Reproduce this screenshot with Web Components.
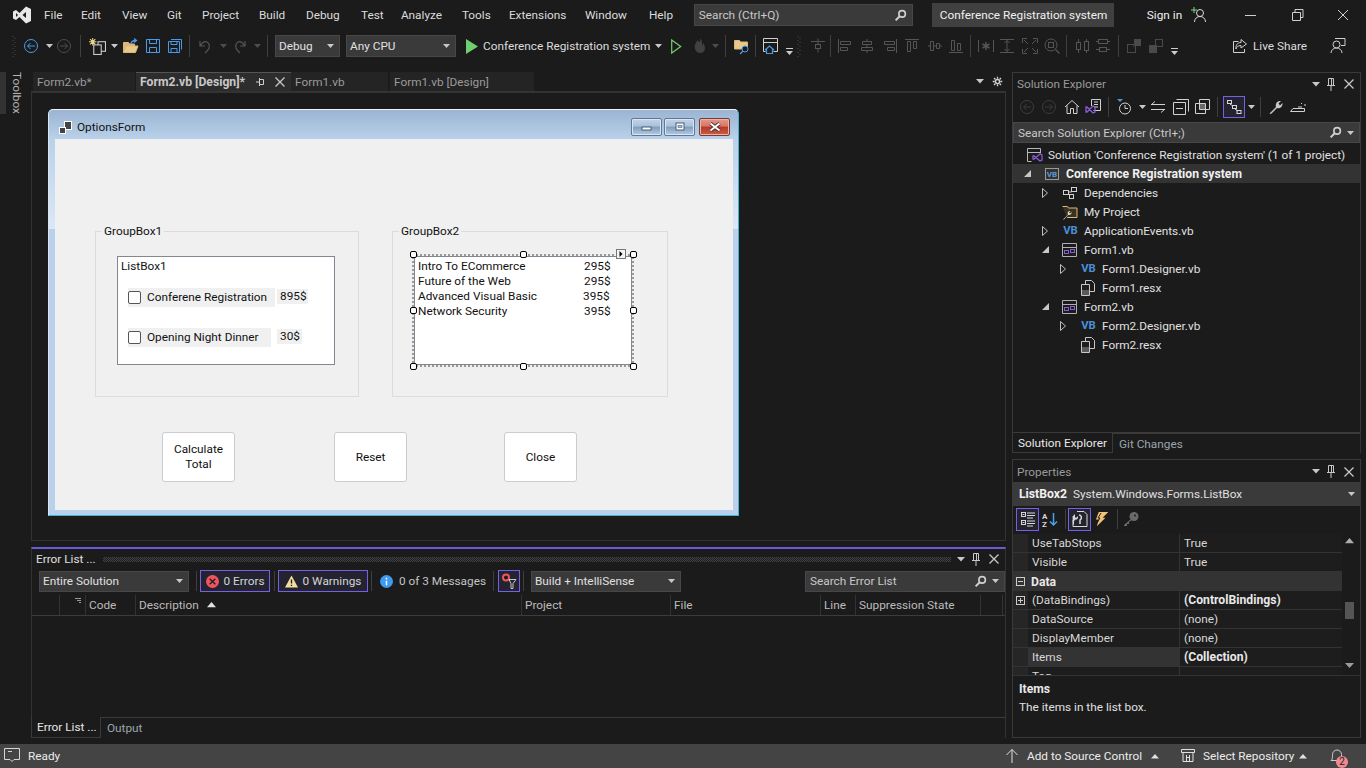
<!DOCTYPE html>
<html><head><meta charset="utf-8"><title>VS</title>
<style>
html,body{margin:0;padding:0;background:#1b1b1b;overflow:hidden}
body{font:11.8px/16px Roboto,"Liberation Sans",sans-serif;color:#dcdcdc}
</style></head><body>
<vs-app></vs-app>
<script>
const D='#555',L='#cfcfcf',B='#4a9ae6',Y='#dcb67a',P='#8a5cd6';
const I={
 back:`<circle cx="8" cy="8" r="6.5" stroke="${B}"/><path d="M12 8H4.500M7.500 5 4.500 8l3 3" stroke="${B}"/>`,
 fwd:`<circle cx="8" cy="8" r="6.5" stroke="#4c4c4c"/><path d="M4 8h7.500M8.500 5l3 3-3 3" stroke="#4c4c4c"/>`,
 fwd2:`<circle cx="8" cy="8" r="6.5" stroke="#3d3d3d"/><path d="M4 8h7.500M8.500 5l3 3-3 3" stroke="#3d3d3d"/>`,
 back2:`<circle cx="8" cy="8" r="6.5" stroke="#3d3d3d"/><path d="M12 8H4.500M7.500 5 4.500 8l3 3" stroke="#3d3d3d"/>`,
 newp:`<path d="M3.500 0v7M0 3.500h7M1 1l5 5M6 1 1 6" stroke="#e6d58a"/><rect x="8.500" y="3.500" width="7" height="9" stroke="${L}" fill="#1b1b1b"/><rect x="4.500" y="6.500" width="7" height="9" stroke="${L}" fill="#1b1b1b"/>`,
 open:`<path d="M.5 14.500v-10h5l1 1.500h5v2" stroke="${Y}" fill="${Y}"/><path d="M.5 14.500l2.500-6.500h12l-2.500 6.500z" fill="#e8c98c" stroke="${Y}"/><path d="M8 6c0-2.500 2-3.500 4.500-3.500M11 .5l2.500 2-2.500 2" stroke="${B}" stroke-width="1.300"/>`,
 save:`<path d="M1.500 1.500h13v13h-13z" stroke="${B}"/><path d="M4.500 1.500v4h7v-4M4.500 14.500v-5h7v5" stroke="${B}"/>`,
 saveall:`<path d="M1.500 3.500h11v11h-11z" stroke="${B}"/><path d="M4 1.500h10.500v10" stroke="${B}"/><path d="M4 3.500v3h6v-3M4 14.500v-4h6v4" stroke="${B}"/>`,
 undo:`<path d="M3 3v5h5M3.500 8C5 4 8 3 10 4c3 1.500 3 6 .500 8.500L8 15" stroke="${D}" stroke-width="1.200"/>`,
 redo:`<path d="M13 3v5H8M12.500 8C11 4 8 3 6 4c-3 1.500-3 6-.5 8.500L8 15" stroke="${D}" stroke-width="1.200"/>`,
 play:[12,15,`<path d="M0 0l12 7.500L0 15z" fill="#6fcf6f"/>`],
 playo:[11,15,`<path d="M.7 1l9 6.500-9 6.500z" stroke="#6fcf6f" stroke-width="1.200"/>`],
 flame:`<path d="M8 0c1 3-1 4-1 4S6 3 6 2C3 5 2 8 3 11c.7 2.500 3 4 5 4 3 0 5-2 5-5s-2-5-2-5c0 2-1 3-1 3S11 3 8 0z" fill="#414141"/>`,
 fsearch:`<path d="M.5 2.500h5l1 1.500h7v7H.5z" fill="#e8c98c" stroke="${Y}"/><circle cx="11" cy="11" r="3" stroke="${B}" fill="#1b1b1b"/><path d="M9 13l-3 3" stroke="${B}" stroke-width="1.300"/>`,
 winhome:`<path d="M.5.5h14v13h-4M.5 4.500h14M.5.5v13h2" stroke="${L}"/><path d="M2 12l4.500-4 4.500 4M3.500 11v4.500h6V11" stroke="${B}" stroke-width="1.200"/>`,
 over:[9,7,`<path d="M1 .5h7" stroke="#ccc"/><path d="M1 3h7L4.500 7z" fill="#ccc"/>`],
 grip:[4,22,`<path d="M1 1v1M3 3v1M1 5v1M3 7v1M1 9v1M3 11v1M1 13v1M3 15v1M1 17v1M3 19v1M1 21v1" stroke="#4c4c4c"/>`],
 sep:[1,22,`<rect width="1" height="22" fill="#3f3f3f"/>`],
 sep2:[1,20,`<rect width="1" height="20" fill="#3f3f3f"/>`],
 tee:`<path d="M1 3.500h14M8 .5v3M8 10.500v4" stroke="${D}"/><rect x="5.500" y="6.500" width="5" height="4" stroke="${D}"/><path d="M8 3.500v3" stroke="${D}"/>`,
 a1:`<path d="M1.500 1v14" stroke="${D}"/><path d="M3.500 3.500h10v3h-10zM3.500 9.500h7v3h-7z" stroke="${D}"/>`,
 a2:`<path d="M8 1v14" stroke="${D}"/><path d="M3.500 3.500h9v3h-9zM2.500 9.500h11v3h-11z" stroke="${D}" fill="#1b1b1b"/>`,
 a3:`<path d="M14.500 1v14" stroke="${D}"/><path d="M2.500 3.500h10v3h-10zM5.500 9.500h7v3h-7z" stroke="${D}"/>`,
 a4:`<path d="M1 1.500h14" stroke="${D}"/><path d="M3.500 3.500h3v10h-3zM9.500 3.500h3v7h-3z" stroke="${D}"/>`,
 a5:`<path d="M1 8h14" stroke="${D}"/><path d="M3.500 3.500h3v9h-3zM9.500 5.500h3v5h-3z" stroke="${D}" fill="#1b1b1b"/>`,
 a6:`<path d="M1 14.500h14" stroke="${D}"/><path d="M3.500 2.500h3v10h-3zM9.500 5.500h3v7h-3z" stroke="${D}"/>`,
 s1:`<path d="M.5 2v12M15.500 2v12" stroke="${D}"/><path d="M8 4v8M4.500 6l7 4M11.500 6l-7 4" stroke="${D}" stroke-width="1.500"/>`,
 s2:`<path d="M1 1.500h14M1 14.500h14M8 2.500v11M5.500 5 8 2.500 10.500 5M5.500 11 8 13.500l2.500-2.500" stroke="${D}"/>`,
 s3:`<path d="M.5 5V.5H5M11 .5h4.500V5M.5 11v4.500H5M11 15.500h4.500V11M2 2l4 4M14 2l-4 4M2 14l4-4M14 14l-4-4" stroke="${D}"/>`,
 s4:`<circle cx="7" cy="7" r="6" stroke="${D}"/><rect x="4.500" y="4.500" width="5" height="5" stroke="${D}"/><path d="M11.500 11.500l4 4" stroke="${D}" stroke-width="1.300"/>`,
 c1:`<path d="M3.500 1v14M11.500 1v14" stroke="${D}"/><rect x="1.500" y="4.500" width="4" height="7" stroke="${D}" fill="#1b1b1b"/><rect x="9.500" y="3.500" width="4" height="9" stroke="${D}" fill="#1b1b1b"/>`,
 c2:`<path d="M1 3.500h14M1 11.500h14" stroke="${D}"/><rect x="3.500" y="1.500" width="9" height="4" stroke="${D}" fill="#1b1b1b"/><rect x="4.500" y="9.500" width="7" height="4" stroke="${D}" fill="#1b1b1b"/>`,
 o1:`<rect x="8" y="1" width="7" height="7" fill="#4a4a4a"/><rect x="1.500" y="6.500" width="8" height="8" stroke="#4a4a4a" fill="#1b1b1b"/><path d="M9 7l-2 2" stroke="#4a4a4a"/>`,
 o2:`<rect x="7.500" y="1.500" width="7" height="7" stroke="#4a4a4a"/><rect x="1" y="7" width="8" height="8" fill="#4a4a4a"/>`,
 share:`<path d="M9 1.500l5.500 4.500L9 10V7.500C6 7.500 4.500 9 4 11c-.5-4 1.500-6.500 5-6.500z" stroke="${L}"/><path d="M6.500 3.500h-5v11h11V11" stroke="${L}"/>`,
 feed:`<path d="M5 .5h10v7h-4" stroke="${L}"/><circle cx="6.500" cy="6.500" r="3.500" stroke="${L}" fill="#1b1b1b"/><path d="M1 15c0-3 2.500-5 5.500-5s5.500 2 5.500 5" stroke="${L}"/>`,
 lens:`<circle cx="10" cy="6" r="4" stroke="#cfcfcf" stroke-width="2"/><path d="M7 9l-5 5" stroke="#cfcfcf" stroke-width="2.500"/>`,
 arr:[7,4,`<path d="M0 0h7L3.500 4z" fill="#c8c8c8"/>`],
 arrd:[7,4,`<path d="M0 0h7L3.500 4z" fill="#4d4d4d"/>`],
 arru:[7,4,`<path d="M0 4h7L3.500 0z" fill="#e0e0e0"/>`],
 arrb:[9,5,`<path d="M0 0h9L4.500 5z" fill="#c8c8c8"/>`],
 pinv:[8,13,`<path d="M1.500.5h5v7h-5zM0 7.500h8M4 8v5M4.500 1v6" stroke="#c8c8c8"/>`],
 pinh:[8,8,`<path d="M3.500 1.500h4v5h-4zM0 4h3.500M3.500 0v8" stroke="#cfcfcf"/>`],
 x:[10,10,`<path d="M.5.5l9 9M9.500.5l-9 9" stroke="#c8c8c8" stroke-width="1.300"/>`],
 gear:`<circle cx="8" cy="8" r="3" stroke="#cfcfcf" stroke-width="2"/><path d="M8 1v3M8 12v3M1 8h3M12 8h3M3 3l2 2M11 11l2 2M13 3l-2 2M5 11l-2 2" stroke="#cfcfcf" stroke-width="2"/>`,
 user:`<circle cx="9" cy="6" r="3.500" stroke="#d8d8d8"/><path d="M3.500 15c0-3.500 2.500-5.500 5.500-5.500s5.500 2 5.500 5.500" stroke="#d8d8d8"/><path d="M3 0v6M0 3h6" stroke="#7ed67e"/>`,
 wmin:`<path d="M2 8.500h11" stroke="#d0d0d0"/>`,
 wres:`<path d="M3.500 5.500h8v8h-8zM6 5V2.500h8v8h-2.500" stroke="#d0d0d0"/>`,
 wx:`<path d="M3 3l10 10M13 3L3 13" stroke="#d0d0d0"/>`,
 home:`<path d="M1 8l7-6.500L15 8M3 6.500v8h3.500V9.500h3v5H13v-8" stroke="#d2d2d2"/>`,
 vsdoc:`<path d="M6.500 7V.5h9v11h-7" stroke="#d2d2d2"/><path d="M9 3h4M9 5.500h4M9 8h4" stroke="#d2d2d2"/><path d="M1 8l1 0 6 6 2-1V8l-2-1-6 6-1 0z" stroke="${P}" stroke-width="1.300"/>`,
 clock:`<path d="M1 0h6L4 3z" fill="#3f9be8"/><circle cx="9" cy="9.500" r="5.500" stroke="#d2d2d2"/><path d="M9 6v3.500h3" stroke="#d2d2d2"/>`,
 sync:`<path d="M1 5.500h14M5 2.500L1.500 5.500M1 10.500h14M11 13.500l3.500-3" stroke="#d2d2d2"/>`,
 coll:`<path d="M.5 3.500h12v12H.5zM3.500.5h12v12" stroke="#d2d2d2"/><path d="M3 9.500h7" stroke="#d2d2d2"/>`,
 copies:`<path d="M.5 4.500h10v10H.5z" stroke="#d2d2d2"/><path d="M4.500.5h10v10h-10z" stroke="#d2d2d2"/><rect x="5" y="5" width="5" height="5" fill="#6a6a6a"/>`,
 tree:`<rect x="1.500" y="1.500" width="4" height="3" stroke="#d8d8d8"/><rect x="6.500" y="6.500" width="4" height="3" stroke="#d8d8d8"/><rect x="11" y="11.500" width="4" height="3" stroke="#d8d8d8"/><path d="M4 5l3 2M9 10l3 2" stroke="#d8d8d8"/>`,
 wrench:`<path d="M1.500 14.500L8 8c-1-3 1-6.500 5-6l-2.500 2.500 1.500 2L14.500 4c.5 3.500-2.500 6-5.500 5L3 15z" fill="#c8c8c8"/>`,
 prev:`<path d="M.5 12.500h14v-3H3zM8 8h4M11 5l1-1M14 6h2" stroke="#d2d2d2"/>`,
 sln:`<path d="M.5 5.500h13M.5 1.500h13v5M.5 1.500v13h4" stroke="#b8b8b8"/><path d="M6 9l1 0 6 5 2-1V8l-2-1-6 5-1 0z" stroke="${P}" stroke-width="1.300"/>`,
 vbp:`<rect x="1.500" y="2.500" width="13" height="11" stroke="#9a9a9a"/><text x="8" y="11" font-size="8" font-weight="700" font-family="Roboto" text-anchor="middle" fill="#5a9bd8">VB</text>`,
 deps:`<rect x="1.500" y="5.500" width="5" height="4" stroke="#d0d0d0"/><rect x="9.500" y="2.500" width="5" height="4" stroke="#d0d0d0"/><rect x="7.500" y="9.500" width="4" height="4" stroke="#d0d0d0"/><path d="M6.500 7h3" stroke="#d0d0d0"/>`,
 myproj:`<path d="M.5 2.500h5l1 1.500h8.500v9.500H5" fill="#3a3320" stroke="${Y}"/><path d="M1 15.500L6 10.500c-1-2 .5-4 2.500-3.500L7 8.500l1 1L9.500 8c.5 2-1.500 3.500-3.500 3L2 15.500z" fill="#d8d8d8"/>`,
 vb:[16,11,`<text x="8" y="10" font-size="12" font-weight="700" font-family="Roboto" text-anchor="middle" fill="#4a8fd8">VB</text>`],
 formi:`<path d="M.5 1.500h14v13H.5zM.5 5.500h14" stroke="#b0b0b0"/><rect x="2.500" y="8.500" width="4" height="3" stroke="${P}"/><rect x="8.500" y="7.500" width="4" height="3" stroke="${P}"/>`,
 resx:`<path d="M5.500.5h6l3 3v8h-9z" stroke="#c8c8c8"/><path d="M1.500 4.500h8v11h-8z" stroke="#c8c8c8" fill="#1f1f1f"/><path d="M2 10h7v5H2z" fill="#5a5a5a"/>`,
 open3:[7,7,`<path d="M0 7h7V0z" fill="#c8c8c8"/>`],
 closed3:[6,10,`<path d="M.5.5l5 4.500-5 4.500z" stroke="#c0c0c0" fill="none"/>`],
 err:`<circle cx="8" cy="8" r="8" fill="#f0555f"/><path d="M4.500 4.500l7 7M11.500 4.500l-7 7" stroke="#1f1f1f" stroke-width="1.700"/>`,
 warn:`<path d="M8 .5L16 15.500H0z" fill="#f5dfa0"/><path d="M8 5.500v5M8 12v1.500" stroke="#1f1f1f" stroke-width="1.700"/>`,
 info:`<circle cx="8" cy="8" r="8" fill="#3d9bf0"/><path d="M8 3.500v2M8 7v5.500" stroke="#fff" stroke-width="1.800"/>`,
 filt:`<circle cx="5" cy="4.500" r="3" stroke="#f0555f" stroke-width="2" fill="#1b1b1b"/><path d="M8 6.500h7l-3 4v5h-2v-5z" stroke="#c8c8c8"/>`,
 corner:[6,6,`<path d="M0 .5h6M2 2.500h4M4 4.500h2" stroke="#999"/>`],
 cat:`<rect x="1.500" y="1.500" width="4" height="4" stroke="#d8d8d8"/><rect x="1.500" y="9.500" width="4" height="4" stroke="#d8d8d8"/><path d="M7 2h8M7 4.500h8M7 7h6M7 10h8M7 12.500h8M7 15h6" stroke="#d8d8d8"/><path d="M2.500 3.500h2M2.500 11.500h2" stroke="#d8d8d8"/>`,
 az:`<text x="0" y="7.500" font-size="8" font-weight="700" font-family="Roboto" fill="#d8d8d8">A</text><text x="0" y="15.500" font-size="8" font-weight="700" font-family="Roboto" fill="#d8d8d8">Z</text><path d="M11.500 2v12M8 10.500l3.500 3.500 3.500-3.500" stroke="#4aa3ee" stroke-width="1.500"/>`,
 propd:`<path d="M5 .5h7l3 3v12H1V9" stroke="#d8d8d8"/><path d="M.5 5.500L3 3v3l1 1 2-2c.5 3-1.500 4-2.500 3.500L2 10v3.500H1z" fill="#d8d8d8"/><path d="M7 4c2 0 3 2 2 4l-1 1v4" stroke="#d8d8d8" stroke-width="1.500"/>`,
 bolt:`<path d="M9 0H4L1 8h3l-2 7 9-9H8l6-6z" transform="translate(1 1) scale(.95)" fill="#f0c27a"/><path d="M3 12l3-5H4L7 2" stroke="#1f1f1f"/>`,
 key:`<circle cx="11" cy="5.500" r="4.500" fill="#6a6a6a"/><path d="M8 8l-7 6v1h3v-2h2v-2l3-2" fill="#6a6a6a"/><circle cx="12" cy="4.500" r="1" fill="#1f1f1f"/>`,
 msg:`<path d="M.5.5h15v11H10l-2 2-2-2H.5z" stroke="#d6d6d6"/><path d="M4 3.500h4" stroke="#d6d6d6"/>`,
 up:`<path d="M8 15V1.500M2.500 7L8 1.500 13.500 7" stroke="#e0e0e0"/>`,
 repo:`<path d="M.5 1.500h13v3h-13zM2 4.500v9h10v-9M5.500 13V7M8.500 13V7M5.500 9.500h3" stroke="#e0e0e0"/>`,
 bell:`<path d="M2 12.500c1.500-1 1.500-3 1.500-6 0-2.500 2-4.500 4.500-4.500s4.500 2 4.500 4.500c0 3 0 5 1.500 6zM7 14.500h2" stroke="#cfcfcf"/>`,
 wicon:[13,13,`<rect x="5.500" y=".5" width="7" height="8" stroke="#fff" fill="#444"/><rect x=".5" y="6.500" width="6" height="6" stroke="#fff" fill="#444"/>`]
};
function def(name,css,fn){customElements.define(name,class extends HTMLElement{connectedCallback(){if(this.shadowRoot)return;const a=n=>this.getAttribute(n);this.attachShadow({mode:'open'}).innerHTML=`<style>${css}</style>`+fn(a,this)}})}

def('vs-icon',':host{display:inline-flex;flex:none;align-items:center;line-height:0}svg{display:block;overflow:visible;flex:none}',a=>{
 const e=I[a('n')];const [vw,vh,s]=Array.isArray(e)?e:[16,16,e];const w=+(a('w')||vw);
 const snap=vw==16&&!Array.isArray(e)&&w>=14&&w<16;const r=snap?16:w;
 return `<style>:host{width:${w}px}</style><svg style="margin-left:${w-r}px" width="${r}" height="${r*vh/vw}" viewBox="0 0 ${vw} ${vh}" fill="none">${s}</svg>`});

const strip=(x0,items)=>{let c=x0,o='';for(const [x,w,n,ex] of items){const ml=x-c;c=x+w;
 o+=n[0]=='<'?`<span style="display:flex;flex:none;width:${w}px;margin-left:${ml}px;${ex||''}">${n}</span>`:`<vs-icon n="${n}" w="${w}" style="margin-left:${ml}px;${ex||''}"></vs-icon>`}return o};

def('vs-combo',':host{display:flex;align-items:center;box-sizing:border-box;background:#3a3a3a;border:1px solid #474747;height:100%;width:100%;padding:0 5px 0 3px;color:#e0e0e0}span{flex:1;white-space:nowrap}',a=>`<span>${a('t')}</span><vs-icon n="arr"></vs-icon>`);
def('vs-toggle',':host{display:flex;align-items:center;justify-content:center;gap:5px;box-sizing:border-box;border:1px solid #7560e6;height:100%;width:100%;background:#242430;color:#d4d4d4;white-space:nowrap}',()=>`<slot></slot>`);
def('vs-search',`:host{display:flex;align-items:center;box-sizing:border-box;background:#3a3a3a;border:1px solid #474747;height:100%;padding:0 5px 0 4px;color:#c8c8c8}span{flex:1;white-space:nowrap}`,a=>`<span>${a('t')}</span><vs-icon n="lens" w="13"></vs-icon>${a('drop')?'<vs-icon n="arr" style="margin-left:5px"></vs-icon>':''}`);

def('vs-menu',':host{display:flex;height:30px;align-items:center;flex:none;position:relative;color:#dcdcdc;background:#1b1b1b}span{white-space:nowrap}.pill{background:#404040;height:24px;display:flex;align-items:center;padding:0 8px;box-sizing:border-box;color:#f0f0f0;white-space:nowrap}',()=>{
 const it=[[44,'File'],[81,'Edit'],[122,'View'],[167,'Git'],[202,'Project'],[259,'Build'],[306,'Debug'],[361,'Test'],[401,'Analyze'],[462,'Tools'],[509,'Extensions'],[585,'Window'],[649,'Help']];
 return strip(0,[[12,20,'<svg width="20" height="20" viewBox="0 0 20 20"><path d="M1 6.500l3-1.500 3.500 3L14 1.500l5 2.500v12l-5 2.500L7.500 12 4 15l-3-1.500zM4 8v4l2-2zM14 7l-3.500 3 3.500 3z" fill="#e8e8e8" fill-rule="evenodd"/></svg>']].concat(it.map(([x,t])=>[x,t.length*6.6,`<span>${t}</span>`]))
 .concat([[694,219,'<vs-search t="Search (Ctrl+Q)" style="width:219px;height:22px"></vs-search>','height:22px'],[932,182,'<div class="pill" style="width:182px">Conference Registration system</div>'],[1147,36,'<span style="color:#f0f0f0">Sign in</span>'],[1191,16,'user'],[1243,16,'wmin'],[1289,16,'wres'],[1335,16,'wx']]));
});

def('vs-tools',':host{display:flex;height:32px;align-items:center;flex:none;color:#dcdcdc}span{white-space:nowrap}',()=>strip(0,[
 [12,4,'grip','height:22px'],[24,15,'back'],[46,7,'arr'],[58,14,'fwd'],[80,1,'sep'],[89,17,'newp'],[111,7,'arr'],[123,16,'open'],[146,15,'save'],[168,15,'saveall'],[189,1,'sep'],[198,15,'undo'],[220,7,'arrd'],[233,15,'redo'],[254,7,'arrd'],[267,1,'sep'],
 [275,65,'<vs-combo t="Debug"></vs-combo>','height:22px'],[346,110,'<vs-combo t="Any CPU"></vs-combo>','height:22px'],[466,12,'play'],[483,167,'<span>Conference Registration system</span>'],[655,7,'arr'],[671,11,'playo'],[693,15,'flame'],[712,7,'arrd'],[725,1,'sep'],[734,16,'fsearch'],[755,1,'sep'],[764,15,'winhome'],[785,9,'over','margin-top:11px'],[797,4,'grip','height:22px'],[811,15,'tee'],[830,1,'sep'],
 [838,15,'a1'],[860,15,'a2'],[883,15,'a3'],[905,15,'a4'],[928,15,'a5'],[949,15,'a6'],[970,1,'sep'],[979,15,'s1'],[1000,15,'s2'],[1023,15,'s3'],[1045,15,'s4'],[1066,1,'sep'],[1076,15,'c1'],[1096,15,'c2'],[1118,1,'sep'],[1127,15,'o1'],[1149,15,'o2'],[1170,9,'over','margin-top:11px'],
 [1233,15,'share'],[1253,54,'<span>Live Share</span>'],[1331,15,'feed']]));

def('vs-strip-left',':host{display:flex;flex:none;width:31px;box-sizing:border-box;padding-top:10px;align-items:flex-start}i{display:block;width:6px;height:42px;background:#333}b{font-weight:400;writing-mode:vertical-rl;margin-left:5px;color:#b4b4b4;line-height:12px}',()=>`<i></i><b>Toolbox</b>`);

def('vs-tab',':host{display:flex;align-items:center;box-sizing:border-box;height:19px;background:#242424;color:#9b9b9b;padding-left:4px;flex:none;white-space:nowrap}:host([active]){background:#2d2d2d;border-top:1px solid #555;font-weight:700;font-size:12.2px;color:#c8c8c8}span{flex:1}',(a,h)=>`<span>${a('t')}</span>${h.hasAttribute('active')?'<vs-icon n="pinh" style="margin-right:11px"></vs-icon><vs-icon n="x" style="margin-right:6px"></vs-icon>':''}`);
def('vs-doctabs',':host{display:flex;height:19px;flex:none;align-items:flex-end;padding-left:2px;position:relative}.r{margin-left:auto;display:flex;align-items:center;height:19px}',()=>`<vs-tab t="Form2.vb*" style="width:102px"></vs-tab><vs-tab active t="Form2.vb [Design]*" style="width:155px;margin-left:1px"></vs-tab><vs-tab t="Form1.vb" style="width:97px"></vs-tab><vs-tab t="Form1.vb [Design]" style="width:144px;margin-left:2px"></vs-tab><div class="r"><vs-icon n="arr" w="8"></vs-icon><vs-icon n="gear" w="11" style="margin:0 3px 0 8px"></vs-icon></div>`);

/* WinForms designer */
def('vs-wbtn',':host{display:flex;align-items:center;justify-content:center;box-sizing:border-box;width:31px;height:18px;border:1px solid #5e7896;border-radius:2px;background:linear-gradient(#c3d4e8 0,#a9c0da 45%,#7f9cbc 50%,#b5cbe4 100%);box-shadow:inset 0 0 0 1px #d9e5f2}:host([red]){background:linear-gradient(#e2998c 0,#d57766 45%,#b53a26 50%,#c85d48 100%);border-color:#7a3a33;box-shadow:inset 0 0 0 1px #e8b5ab;margin-left:2px}',(a,h)=>`<svg width="12" height="10" viewBox="0 0 12 10">${a('g')=='min'?'<rect x="1" y="5" width="9" height="3" fill="#fff" stroke="#4a5f78"/>':a('g')=='max'?'<rect x="2" y="1" width="8" height="7" fill="#fff" stroke="#4a5f78"/><rect x="4" y="3.500" width="4" height="2" fill="#a9c0da" stroke="#4a5f78" stroke-width=".6"/>':'<path d="M1.500 1.500l9 7M10.500 1.500l-9 7" stroke="#4a2a25" stroke-width="3.600"/><path d="M1.500 1.500l9 7M10.500 1.500l-9 7" stroke="#fff" stroke-width="2"/>'}</svg>`);
def('vs-group',':host{display:block;position:relative;box-sizing:border-box;border:1px solid #dcdcdc;height:166px;padding:24px 0 0 21px;flex:none}label{position:absolute;left:6px;top:-9px;background:#f0f0f0;padding:0 2px;color:#111;line-height:16px}',a=>`<label>${a('t')}</label><slot></slot>`);
def('vs-listbox',':host{display:block;box-sizing:border-box;width:218px;height:109px;border:1px solid #828790;background:#fff;color:#111;line-height:15px;padding:2px 3px;position:relative}',()=>`<slot></slot>`);
def('vs-check',`:host{display:flex;align-items:flex-start;margin-left:7px}
.l{display:flex;align-items:center;height:19px;background:#f0f0f0;box-sizing:border-box;flex:none}.b{width:13px;height:13px;box-sizing:border-box;border:1px solid #555;border-radius:2px;background:#fff;margin-right:6px;flex:none}.p{background:#f0f0f0;height:15px;margin-top:1px;padding-left:3px;box-sizing:border-box;flex:none}`,a=>`<div class="l" style="width:${a('w')}px"><div class="b"></div>${a('t')}</div><div class="p" style="width:${a('pw')}px;margin-left:${a('g')}px">${a('p')}</div>`);
def('vs-item',':host{display:flex;height:15px;white-space:nowrap}span{display:block;width:166px;flex:none}',a=>`<span>${a('t')}</span><b style="font-weight:400;margin-left:${a('o')||0}px">${a('p')}</b>`);
def('vs-handle',':host{position:absolute;width:7px;height:7px;box-sizing:border-box;border:1px solid #000;border-radius:2px;background:#fff}',()=>'');
def('vs-fbtn',':host{display:flex;align-items:center;justify-content:center;text-align:center;box-sizing:border-box;width:73px;height:50px;background:#fff;border:1px solid #ccc;border-radius:3px;color:#111;line-height:15px;flex:none}',()=>`<slot></slot>`);
def('vs-form',`:host{display:block;box-sizing:border-box;width:691px;height:407px;border:1px solid;border-color:#eef3f8 #3fb4d6 #3fb4d6 #dbe5ef;border-radius:5px 5px 0 0;padding:0 5px 5px 6px;color:#111;
 background:linear-gradient(#b9d1ea,#dbe8f6) 0 29px/100% 90px no-repeat,linear-gradient(#9ab4d2 0,#b9d1ea 29px);background-color:#b9d1ea}
.t{height:29px;box-sizing:border-box;display:flex;align-items:center;padding:5px 0 0 4px}.t span{margin-left:5px;color:#111;flex:1}.w{display:flex;gap:2px;margin-right:3px}
.c{background:#f0f0f0;height:371px;box-sizing:border-box;padding-top:92px}.g{display:flex;padding-left:40px;gap:33px}.bt{display:flex;padding-left:107px;margin-top:35px}`,()=>`
<div class="t"><vs-icon n="wicon" w="13"></vs-icon><span>OptionsForm</span><div class="w"><vs-wbtn g="min"></vs-wbtn><vs-wbtn g="max"></vs-wbtn><vs-wbtn red g="x"></vs-wbtn></div></div>
<div class="c"><div class="g">
 <vs-group t="GroupBox1" style="width:264px"><vs-listbox><div style="margin-bottom:14px">ListBox1</div>
  <vs-check t="Conferene Registration" w="147" p="895$" pw="31" g="2"></vs-check><div style="height:21px"></div><vs-check t="Opening Night Dinner" w="143" p="30$" pw="25" g="6"></vs-check></vs-listbox></vs-group>
 <vs-group t="GroupBox2" style="width:276px"><vs-listbox style="outline:2px dotted #999;outline-offset:0">
  <vs-item t="Intro To ECommerce" p="295$"></vs-item><vs-item t="Future of the Web" p="295$"></vs-item><vs-item t="Advanced Visual Basic" p="395$" o="-1"></vs-item><vs-item t="Network Security" p="395$"></vs-item>
  <vs-handle style="left:-5px;top:-6px"></vs-handle><vs-handle style="left:105px;top:-6px"></vs-handle><vs-handle style="right:-6px;top:-6px"></vs-handle>
  <vs-handle style="left:-5px;top:50px"></vs-handle><vs-handle style="right:-6px;top:50px"></vs-handle>
  <vs-handle style="left:-5px;bottom:-6px"></vs-handle><vs-handle style="left:105px;bottom:-6px"></vs-handle><vs-handle style="right:-6px;bottom:-6px"></vs-handle>
  <svg style="position:absolute;right:5px;top:-8px" width="10" height="10" viewBox="0 0 10 10"><rect x=".5" y=".5" width="9" height="9" fill="#f4f4f4" stroke="#777"/><path d="M3.500 2l3 3-3 3z" fill="#000"/></svg>
 </vs-listbox></vs-group></div>
 <div class="bt"><vs-fbtn>Calculate<br>Total</vs-fbtn><vs-fbtn style="margin-left:99px">Reset</vs-fbtn><vs-fbtn style="margin-left:97px">Close</vs-fbtn></div>
</div>`);

def('vs-designer',':host{display:block;box-sizing:border-box;height:450px;border:1px solid #333;border-top:2px solid #333;padding:16px 0 0 16px;flex:none;background:#1b1b1b}',()=>`<vs-form></vs-form>`);

def('vs-ptitle',':host{display:flex;align-items:center;height:22px;box-sizing:border-box;flex:none;color:#9a9a9a;padding-left:4px}span{flex:1}',a=>`<span>${a('t')}</span><vs-icon n="arr" w="8"></vs-icon><vs-icon n="pinv" style="margin:0 9px 0 7px"></vs-icon><vs-icon n="x" w="10" style="margin-right:6px"></vs-icon>`);

def('vs-errorlist',`:host{display:flex;flex-direction:column;box-sizing:border-box;height:170px;border-top:2px solid #6a5cd8;border-left:1px solid #333;border-right:1px solid #333;flex:none}
.h{display:flex;align-items:center;height:20px;padding-left:4px;flex:none;color:#e0e0e0}.g{flex:1;height:5px;margin:0 6px 0 7px;background:repeating-conic-gradient(#444 0 25%,transparent 0 50%) 0 0/2px 2px}
.tb{display:flex;height:22px;flex:none;align-items:center;margin-top:1px}span{white-space:nowrap}
.hd{display:flex;height:20px;margin-top:3px;border-bottom:1px solid #3c3c3c;padding-left:2px;flex:none;color:#bcbcbc}.hd div{box-sizing:border-box;border-right:1px solid #333;padding-left:3px;line-height:20px;white-space:nowrap;display:flex;align-items:center;flex:none}`,()=>`
<div class="h"><span>Error List ...</span><div class="g"></div><vs-icon n="arr" w="8"></vs-icon><vs-icon n="pinv" style="margin:0 9px 0 7px"></vs-icon><vs-icon n="x" style="margin-right:6px"></vs-icon></div>
<div class="tb">${strip(32,[[39,150,'<vs-combo t="Entire Solution"></vs-combo>','height:21px'],[196,1,'sep2'],[200,70,'<vs-toggle><vs-icon n="err" w="13"></vs-icon>0 Errors</vs-toggle>','height:22px'],[274,1,'sep2'],[278,90,'<vs-toggle><vs-icon n="warn" w="13"></vs-icon>0 Warnings</vs-toggle>','height:22px'],[371,1,'sep2'],[380,13,'info'],[399,84,'<span>0 of 3 Messages</span>','color:#c4c4c4'],[493,1,'sep2'],[498,22,'<vs-toggle><vs-icon n="filt" w="16"></vs-icon></vs-toggle>','height:22px'],[523,1,'sep2'],[531,150,'<vs-combo t="Build + IntelliSense"></vs-combo>','height:21px'],[805,200,'<vs-search t="Search Error List" drop="1" style="width:200px"></vs-search>','height:21px']])}</div>
<div class="hd"><div style="width:26px"></div><div style="width:26px;justify-content:flex-end;align-items:flex-start;padding:3px 4px 0 0"><vs-icon n="corner"></vs-icon></div><div style="width:50px">Code</div><div style="width:386px">Description<vs-icon n="arru" w="9" style="margin-left:8px"></vs-icon></div><div style="width:149px">Project</div><div style="width:150px">File</div><div style="width:35px">Line</div><div style="width:125px">Suppression State</div><div style="width:22px"></div></div>`);

def('vs-btabs',':host{display:flex;height:21px;flex:none}div{box-sizing:border-box;display:flex;align-items:center;white-space:nowrap}.a{flex:none;border:1px solid #3a3a3a;border-top:0;padding-left:5px;color:#e8e8e8}.b{flex:1;border-top:1px solid #3a3a3a;padding-left:6px;color:#9aa5ad}.c{border-right:1px solid #333}',a=>`<div class="a" style="width:${a('aw')||70}px">${a('a')}</div><div class="b ${a('r')?'c':''}">${a('b')}</div>`);

def('vs-row',`:host{display:flex;align-items:center;height:19px;white-space:nowrap;color:#e0e0e0}:host([sel]){background:#333;font-weight:700;font-size:12.2px;color:#f0f0f0}.ar{width:16px;flex:none;display:flex;justify-content:center}.ic{width:22px;flex:none;margin-left:6px;display:flex;justify-content:center}`,a=>{
 const l=+a('l');const pad=l?6+18*(l-1):11;const e=a('e');
 return `<div style="width:${pad}px;flex:none"></div>${l?`<div class="ar">${e?`<vs-icon n="${e=='o'?'open3':'closed3'}"></vs-icon>`:''}</div>`:''}<div class="ic" ${l?'':'style="margin-left:0"'}><vs-icon n="${a('i')}" w="${a('iw')||15}"></vs-icon></div><span style="margin-left:${l?3:2}px">${a('t')}</span>`});

def('vs-solution',`:host{display:flex;flex-direction:column;box-sizing:border-box;height:361px;border:1px solid #3a3a3a;flex:none}.tb{display:flex;align-items:center;height:26px;flex:none;margin-top:-1px}.s{height:21px;flex:none;margin-top:2px}`,()=>`
<vs-ptitle t="Solution Explorer"></vs-ptitle>
<div class="tb">${strip(1013,[[1021,14,'back2'],[1043,14,'fwd2'],[1065,15,'home'],[1086,15,'vsdoc'],[1108,1,'sep2'],[1117,15,'clock'],[1139,7,'arr'],[1152,14,'sync'],[1174,15,'coll'],[1196,15,'copies'],[1217,1,'sep2'],[1223,22,'<vs-toggle><vs-icon n="tree" w="16"></vs-icon></vs-toggle>','height:22px'],[1248,7,'arr'],[1260,1,'sep2'],[1269,15,'wrench'],[1290,16,'prev']])}</div>
<vs-search class="s" t="Search Solution Explorer (Ctrl+;)" drop="1"></vs-search>
<div style="height:2px;flex:none"></div>
<vs-row l="0" i="sln" t="Solution 'Conference Registration system' (1 of 1 project)"></vs-row>
<vs-row sel l="1" e="o" i="vbp" t="Conference Registration system"></vs-row>
<vs-row l="2" e="c" i="deps" t="Dependencies"></vs-row>
<vs-row l="2" i="myproj" t="My Project"></vs-row>
<vs-row l="2" e="c" i="vb" t="ApplicationEvents.vb"></vs-row>
<vs-row l="2" e="o" i="formi" t="Form1.vb"></vs-row>
<vs-row l="3" e="c" i="vb" t="Form1.Designer.vb"></vs-row>
<vs-row l="3" i="resx" t="Form1.resx"></vs-row>
<vs-row l="2" e="o" i="formi" t="Form2.vb"></vs-row>
<vs-row l="3" e="c" i="vb" t="Form2.Designer.vb"></vs-row>
<vs-row l="3" i="resx" t="Form2.resx"></vs-row>`);

def('vs-prop',`:host{display:flex;height:19px;box-sizing:border-box;border-bottom:1px solid #333;white-space:nowrap;background:#262626;flex:none}
.g{width:15px;flex:none;display:flex;align-items:center;justify-content:center}.n{width:152px;flex:none;box-sizing:border-box;padding-left:4px;background:#1d1d1d;border-right:1px solid #333;line-height:18px;color:#d8d8d8}.v{flex:1;padding-left:4px;background:#1d1d1d;line-height:18px;color:#d8d8d8}
:host([hl]) .n{background:#333}:host([b]) .v{font-weight:700;font-size:12.2px;color:#e8e8e8}`,a=>`<div class="g">${a('plus')?'<svg width="9" height="9" viewBox="0 0 9 9" fill="none"><rect x=".5" y=".5" width="8" height="8" stroke="#ccc"/><path d="M2 4.500h5M4.500 2v5" stroke="#ccc"/></svg>':''}</div><div class="n">${a('n')}</div><div class="v">${a('v')}</div>`);
def('vs-props',`:host{display:flex;flex-direction:column;box-sizing:border-box;height:279px;border:1px solid #3a3a3a;flex:none}
.cb{display:flex;align-items:center;height:24px;background:#3a3a3a;flex:none;padding:0 5px 0 6px;white-space:nowrap;color:#e0e0e0}.cb b{margin-right:6px;color:#f0f0f0;font-size:12.2px}.cb span{flex:1}
.tb{display:flex;align-items:center;height:26px;flex:none}.gw{display:flex;height:141px;overflow:hidden;flex:none;margin-top:2px}.gr{width:329px;flex:none;display:flex;flex-direction:column}
.cat{display:flex;height:19px;background:#333;align-items:center;font-weight:700;font-size:12.2px;flex:none;color:#e8e8e8}.cat svg{margin:0 6px 0 3px}
.sb{flex:1;display:flex;flex-direction:column;align-items:center;position:relative;padding:4px 3px 0 0}.th{width:9px;height:17px;background:#555;margin-top:59px}
.d{border-top:1px solid #333;flex:1;padding:4px 0 0 6px;line-height:18px;color:#e0e0e0;display:block}.d b{color:#e8e8e8;font-size:12.2px}`,()=>`
<vs-ptitle t="Properties" style="padding-top:1px"></vs-ptitle>
<div class="cb"><b>ListBox2</b><span>System.Windows.Forms.ListBox</span><vs-icon n="arr"></vs-icon></div>
<div class="tb">${strip(1013,[[1016,23,'<vs-toggle><vs-icon n="cat" w="16"></vs-icon></vs-toggle>','height:23px'],[1043,15,'az'],[1065,1,'sep2'],[1068,23,'<vs-toggle><vs-icon n="propd" w="16"></vs-icon></vs-toggle>','height:23px'],[1094,16,'bolt'],[1117,1,'sep2'],[1123,16,'key']])}</div>
<div class="gw"><div class="gr">
<vs-prop n="UseTabStops" v="True"></vs-prop><vs-prop n="Visible" v="True"></vs-prop>
<div class="cat"><svg width="9" height="9" viewBox="0 0 9 9" fill="none"><rect x=".5" y=".5" width="8" height="8" stroke="#ccc"/><path d="M2 4.500h5" stroke="#ccc"/></svg>Data</div>
<vs-prop plus="1" b n="(DataBindings)" v="(ControlBindings)"></vs-prop><vs-prop n="DataSource" v="(none)"></vs-prop><vs-prop n="DisplayMember" v="(none)"></vs-prop><vs-prop hl b n="Items" v="(Collection)"></vs-prop><vs-prop n="Tag" v=""></vs-prop>
</div><div class="sb"><vs-icon n="arru" w="9" style="opacity:.75"></vs-icon><div class="th"></div><vs-icon n="arrb" w="9" style="margin-top:44px;opacity:.75"></vs-icon></div></div>
<div class="d"><b>Items</b><br>The items in the list box.</div>`);

def('vs-status',':host{display:flex;align-items:center;height:24px;background:#444;flex:none;color:#ececec;position:relative}span{white-space:nowrap}.bd{position:absolute;left:1336px;top:12px;width:12px;height:12px;border-radius:50%;background:#f08a90;color:#222;font-size:10px;line-height:12px;text-align:center}',()=>strip(0,[[4,16,'msg'],[28,40,'<span>Ready</span>'],[1005,15,'up'],[1027,118,'<span>Add to Source Control</span>'],[1151,8,'arru'],[1182,15,'repo'],[1203,90,'<span>Select Repository</span>'],[1299,8,'arru'],[1329,16,'bell']])+`<div class="bd">2</div>`);

def('vs-app',`:host{display:flex;flex-direction:column;width:1366px;height:768px;overflow:hidden;background:#1b1b1b}
.m{display:flex;height:682px;flex:none}.c{width:975px;flex:none;display:flex;flex-direction:column;padding-top:10px;box-sizing:border-box}.r{width:349px;margin-left:6px;flex:none;display:flex;flex-direction:column;padding-top:10px;box-sizing:border-box}`,()=>`
<vs-menu></vs-menu><vs-tools></vs-tools>
<div class="m"><vs-strip-left></vs-strip-left>
<div class="c"><vs-doctabs></vs-doctabs><vs-designer></vs-designer><div style="height:6px;flex:none"></div><vs-errorlist></vs-errorlist><vs-btabs a="Error List ..." b="Output" r="1"></vs-btabs></div>
<div class="r"><vs-solution></vs-solution><vs-btabs a="Solution Explorer" aw="101" r="1" b="Git Changes" style="height:20px"></vs-btabs><div style="height:6px;flex:none"></div><vs-props></vs-props></div></div>
<vs-status></vs-status>`);
</script>
</body></html>
